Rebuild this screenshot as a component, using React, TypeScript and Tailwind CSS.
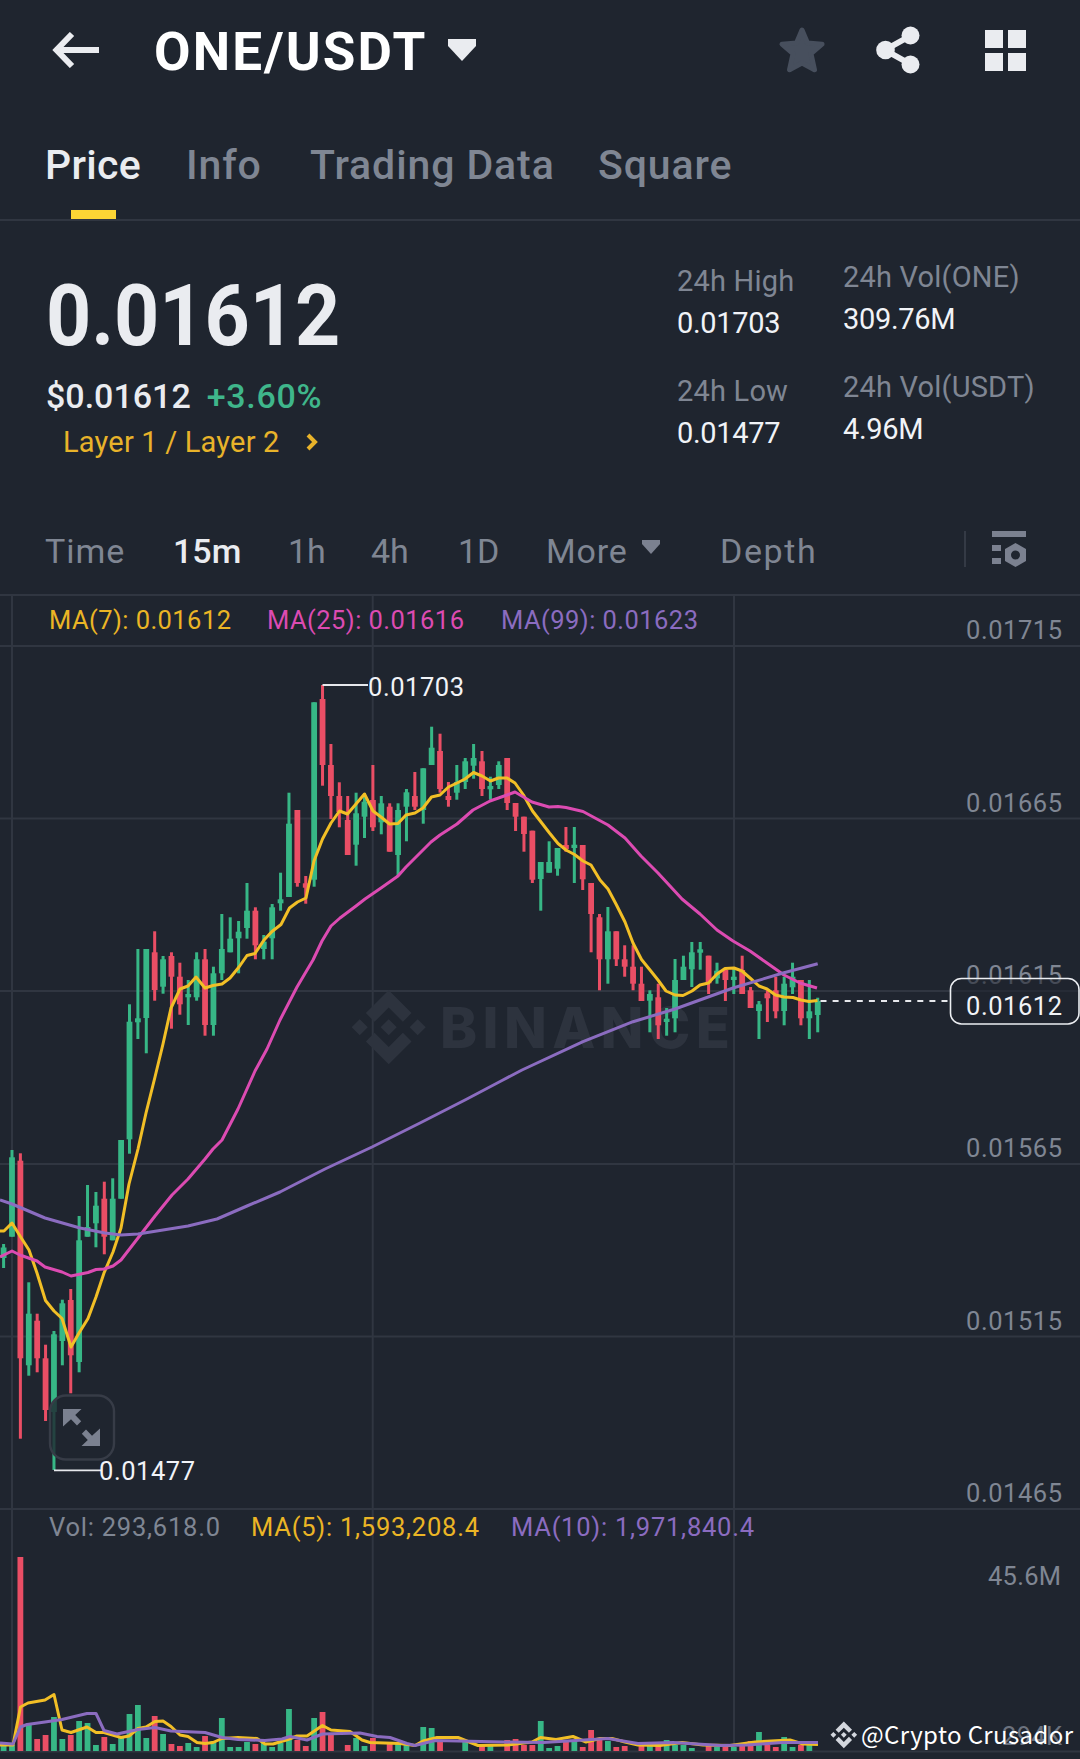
type Candle = [string, number, number, number, number, number];

const STEP = 8.393;
const X0 = 3.6;
const TOP = 594;
const VOL_BASE = 1751;

// side, high, body top, body bottom, low, volume height
const candles: Candle[] = [
  ['g', 1244, 1247.5, 1258, 1268, 6], ['g', 1150, 1157.3, 1236.7, 1236.7, 6], ['r', 1153.3, 1160.7, 1358.3, 1438.7, 194],
  ['g', 1282.3, 1313.7, 1365.3, 1375.7, 27], ['r', 1313.7, 1320.7, 1358.3, 1372.3, 12], ['r', 1344.7, 1358.3, 1410, 1421, 16],
  ['g', 1331, 1334.3, 1412, 1470, 34], ['g', 1299.7, 1303.3, 1341, 1365.3, 12], ['r', 1289, 1300, 1355.3, 1393.3, 16],
  ['g', 1216, 1240.3, 1362, 1372.3, 30], ['g', 1185, 1227, 1236.7, 1236.7, 28], ['g', 1192, 1205.7, 1223.3, 1247.3, 6],
  ['r', 1181.7, 1198.7, 1236.7, 1254.3, 14], ['g', 1178.3, 1198.7, 1240.3, 1240.3, 7], ['g', 1140, 1140, 1198.7, 1198.7, 14],
  ['g', 1004.3, 1021.7, 1139.3, 1153.7, 37], ['g', 949, 1018.3, 1022.3, 1039, 46], ['g', 949, 949, 1018, 1053.3, 13],
  ['r', 931.3, 952.3, 990, 1000.7, 35], ['g', 956, 959.3, 986.7, 993.7, 17], ['r', 952.3, 956, 976.7, 1028.7, 7],
  ['r', 962.7, 976.7, 1004.3, 1014.7, 5], ['g', 980, 994, 997.3, 1025, 8], ['g', 952.3, 959.3, 997.3, 1000.7, 4],
  ['r', 949, 959.3, 1025, 1035.7, 15], ['g', 966.7, 973.3, 1025, 1035.7, 10], ['g', 914, 949, 973.3, 980, 33],
  ['g', 917.3, 938.7, 952.3, 952.3, 4], ['g', 921, 931.7, 938.3, 973.3, 4], ['g', 883, 910.7, 928, 938.7, 9],
  ['r', 907.3, 910.7, 945.3, 959.3, 7], ['g', 935, 941.7, 949, 959.3, 8], ['g', 904, 907.3, 938.3, 959.3, 4],
  ['g', 872.7, 899.3, 903.3, 910.7, 8], ['g', 792.7, 823.7, 897, 897, 42], ['r', 810, 810, 883, 886.7, 11],
  ['r', 876, 883.3, 887.7, 903.7, 5], ['g', 702.3, 702.3, 879.7, 886.7, 33], ['r', 685, 699, 765, 785.7, 39],
  ['r', 744, 765, 796, 819, 16], ['r', 782.3, 796, 812, 827.3, 0], ['r', 796, 820, 855, 855, 6],
  ['g', 792.7, 813.3, 844.7, 865.7, 13], ['g', 793.3, 801.7, 816.7, 838, 5], ['r', 765, 800, 827.3, 831, 13],
  ['g', 796, 803.3, 822.3, 834.3, 0], ['r', 803.3, 806.7, 851.7, 851.7, 7], ['g', 803.3, 810, 855, 876, 9],
  ['g', 789, 792.3, 806.7, 841.3, 6], ['r', 772, 796, 806.7, 810, 0], ['g', 768.3, 768.3, 810, 823.7, 24],
  ['g', 726.7, 747.7, 765, 765, 23], ['r', 733.7, 751, 789, 792.7, 11], ['r', 782, 796, 800, 806.7, 0],
  ['g', 765, 782, 792.7, 799.7, 0], ['g', 758, 761.3, 782, 789, 9], ['g', 744, 758, 765.7, 778.7, 0],
  ['r', 751, 761.3, 789, 796, 6], ['g', 776.7, 786, 789.3, 799.7, 6], ['g', 761.3, 765, 785, 789, 0],
  ['r', 758, 758, 803, 810, 11], ['r', 803, 803, 816.7, 831, 12], ['r', 816.7, 816.7, 834, 851.7, 6],
  ['r', 830.7, 830.7, 879.7, 883, 6], ['g', 862, 862, 879, 910.7, 30], ['g', 841.3, 862, 872.7, 872.7, 3],
  ['g', 848, 848, 868.7, 875.7, 5], ['r', 827, 845, 849, 851.7, 9], ['g', 827, 844.7, 848, 883, 10],
  ['r', 845, 845, 879.3, 890, 4], ['r', 883, 883, 914, 952.3, 21], ['r', 914, 917.3, 959.3, 990.3, 11],
  ['g', 907, 931.3, 959.3, 983.7, 10], ['r', 931.3, 931.3, 959.3, 966, 4], ['r', 945.3, 959.3, 966.7, 976.7, 5],
  ['r', 945.3, 966.7, 983.7, 990.3, 0], ['r', 966.7, 983.7, 1001, 1001, 5], ['g', 990.3, 994, 1000.7, 1032.3, 5],
  ['r', 983.7, 997.3, 1025.3, 1039, 5], ['g', 1008, 1018.7, 1022, 1035.7, 11], ['g', 959, 980, 1018.3, 1032.3, 6],
  ['g', 955.7, 966.7, 980, 980, 6], ['g', 942, 952.3, 969.3, 987, 3], ['g', 942, 949.3, 952.7, 969.7, 0],
  ['r', 955.7, 955.7, 983.3, 994, 6], ['g', 962.7, 970.7, 978.3, 983.7, 4], ['r', 968.3, 970, 980, 1001, 4],
  ['g', 968.3, 976.7, 980, 994, 4], ['r', 955.7, 970, 994, 994, 5], ['r', 987, 990.3, 1008, 1008, 10],
  ['g', 1001, 1004.3, 1011, 1039, 19], ['r', 990.3, 993.3, 998.3, 1022, 6], ['r', 976.7, 990.3, 1011.3, 1018.3, 4],
  ['g', 976.7, 983.7, 1011, 1025.3, 14], ['g', 962.7, 976.7, 987.3, 994, 4], ['r', 980, 980, 1018.3, 1025.3, 6],
  ['g', 980, 1011.3, 1018.3, 1039, 6], ['g', 997.7, 1001, 1015, 1032.3, 0],
];

const ma7 =
  '0,1231 4,1231 12,1223 20,1236 29,1250 37,1273 45.5,1300.5 54,1311 62,1318.5 71,1347 79,1333 88,1318.5 96,1297 104,1273 113,1252 121,1228 129,1184 138,1149 146,1113 155,1077 163,1044 171,1008 180,989 188,986 196,977 205,988 213,985.5 222,984 230,978 239,967 247,955.5 255,953.5 264,940 272,931.5 281,924.5 289.5,908 297.5,902 306,898 314,861 322.5,839 331,823 339.5,811 347.5,814 356,804 364.5,794 373,811 381,817 389.5,824 398,823.5 406,815 415,813 423,808 431.5,797 440,795 448.5,787 457,783 465,779 473.5,772.5 482,776 490.5,781 498.5,778 507,778 515,783 523.5,795 532.5,811 541,822 549.5,833 558,843.5 566,850 574.5,854.5 583,861 591,865 600,880 608,889 616.5,905 625,922 633,943 641.5,959.5 650,970 658,980 666,991 675,995 683,995.5 692,991 700,985 708.5,983 717,974 725,968.5 734,968 742,971 750,978 759,986 767,989 775.5,995 784,997 793,997.5 801,1000 809,1001.5 817.5,1000.5';
const ma25 =
  '0,1257 12,1251 20,1255 37,1261 45,1267 62,1272 71,1276 88,1272.5 96,1269.5 104,1269 113,1266 121,1260 138,1238 155,1216 172,1195 188,1179 205,1159 213,1149 222,1140 238,1109 255,1071 267,1049 280,1020 297,987 313,960 322,941 331,926 340,918 356,906 365,899 381,888 398,876 406,867 423,850 431,842 440,835 457,824 473,810 490,801 507,795 515,792 532,802 549,807 558,806.5 566,807.5 583,811.5 608,825 625,838 641,856 658,873 682,899 700,914 717,930 733,941 750,951 767,963 784,975 800,983 817,988';
const ma99 =
  '0,1200 12,1204 45,1218 80,1228 105,1233 121,1235 138,1234 163,1230 188,1226 217,1219 247,1206 280,1192 325,1169 372,1147 420,1123 466,1099.5 502,1080.5 522,1070 583,1041.7 633,1021.7 675,1009 733,988 783,973 817.7,963.7';
const volMa5 =
  '0,1745 13,1745 20.5,1707 28,1703 45,1700 54,1694.5 62,1730 71,1732.5 87,1727 96,1732.5 104,1732.5 121,1737.5 129,1736 138,1728.5 146,1727 155,1721.5 163,1721 171,1726.5 180,1735 188,1736.5 197,1742.5 205,1743.5 213,1742.5 222,1738.5 238,1737.5 257,1738.5 265,1744 273,1744 288,1739.5 297,1736 307,1736 322.5,1725.5 331,1730 350,1731.5 362,1740 370,1742.5 400,1743.5 415,1745.5 423,1741 437,1737.5 458,1737.5 478,1745.5 508,1745 532,1742 540.5,1737.5 556,1739.5 573,1736.5 586,1742 600,1738.5 612,1738.5 625,1742 638,1745 660,1745.5 682,1742.5 703,1745 730,1745.5 755,1742 790,1740 803,1744 818,1744.5';
const volMa10 =
  '0,1743 13,1744 20.5,1727 27,1724.5 45,1722 62,1719.5 87,1713.5 96,1713.5 104,1730.5 117,1734 138,1729.5 155,1727.5 171,1731 205,1732.5 222,1737.5 238,1739.5 265,1740.5 282,1739 290,1736.5 307,1740 322.5,1734 360,1733 377,1736.5 390,1737.5 407,1743.5 415,1745.5 435,1740.5 504,1742 543,1742.5 608,1738.5 638,1743.5 673,1742.5 721,1745.5 747,1745 782,1742.5 818,1742.5';

const tabs = ['Price', 'Info', 'Trading Data', 'Square'];
const gridRows = [646, 818.5, 991, 1164, 1336.5, 1509];
const gridCols = [12, 372.7, 734];
const axis = ['0.01715', '0.01665', '0.01615', '0.01565', '0.01515', '0.01465'];

function Label({ x, y, w, color, children, size = 25.5 }: { x: number; y: number; w: number; color: string; children: string; size?: number }) {
  return (
    <text x={x} y={y} textLength={w} fill={color} fontSize={size}>
      {children}
    </text>
  );
}

function BinanceMark() {
  return (
    <>
      <path d="M12 0 4.6 7.4l2.8 2.8L12 5.6l4.6 4.6 2.8-2.8zM12 24l-7.4-7.4 2.8-2.8 4.6 4.6 4.6-4.6 2.8 2.8z" />
      <path d="M2.6 9.4 5.2 12l-2.6 2.6L0 12zM21.4 9.4 24 12l-2.6 2.6-2.6-2.6zM12 9.4l2.6 2.6-2.6 2.6L9.4 12z" />
    </>
  );
}

function Stat({ label, value }: { label: string; value: string }) {
  return (
    <div className="h-[110px] text-[29px] leading-[36px] whitespace-nowrap">
      <p className="text-[#7f8693] tracking-[0.2px]">{label}</p>
      <p className="mt-[6px] text-[#f1f3f7] tracking-[-0.3px]">{value}</p>
    </div>
  );
}

function Chart() {
  return (
    <svg className="block w-[1080px] h-[1165px]" viewBox={`0 ${TOP} 1080 1165`} fontFamily="Roboto, sans-serif">
      <g stroke="#303641" strokeWidth="2">
        {gridRows.map((y) => (
          <line key={y} x1="0" x2="1080" y1={y} y2={y} />
        ))}
        {gridCols.map((x) => (
          <line key={x} x1={x} x2={x} y1={TOP} y2={VOL_BASE} />
        ))}
        <line x1="0" x2="1080" y1="1751.5" y2="1751.5" />
        <line x1="0" x2="1080" y1="595" y2="595" />
      </g>

      {/* Watermark */}
      <g fill="#2d333e">
        <g transform="translate(351.7 990.3) scale(3.083)">
          <BinanceMark />
        </g>
        <text x="440" y="1047.7" textLength="290" fontSize="56" fontWeight="800" fontFamily="Inter, sans-serif">
          BINANCE
        </text>
      </g>

      {candles.map(([side, high, top, bottom, low, vol], i) => {
        const x = X0 + i * STEP;
        return (
          <g key={i} fill={side === 'g' ? '#37b786' : '#ea4e65'}>
            <rect x={x - 1.5} y={high} width="3" height={low - high} />
            <rect x={x - 2.9} y={top} width="5.8" height={bottom - top} />
            <rect x={x - 2.9} y={VOL_BASE - vol} width="5.8" height={vol} />
          </g>
        );
      })}

      <g fill="none" strokeWidth="3" strokeLinejoin="round">
        <polyline points={ma7} stroke="#f2bf26" />
        <polyline points={ma25} stroke="#dc4bb2" />
        <polyline points={ma99} stroke="#8b6cc0" />
        <polyline points={volMa5} stroke="#f2bf26" />
        <polyline points={volMa10} stroke="#8b6cc0" />
      </g>

      {/* Indicator legends */}
      <Label x={49} y={628.7} w={182} color="#ebb525">MA(7): 0.01612</Label>
      <Label x={267} y={628.7} w={197} color="#dc4bb2">MA(25): 0.01616</Label>
      <Label x={501} y={628.7} w={197} color="#8b6cc0">MA(99): 0.01623</Label>
      <Label x={49} y={1535.7} w={171} color="#7f8693">Vol: 293,618.0</Label>
      <Label x={251} y={1535.7} w={228} color="#ebb525">MA(5): 1,593,208.4</Label>
      <Label x={511} y={1535.7} w={243} color="#8b6cc0">MA(10): 1,971,840.4</Label>

      {/* Price axis */}
      {axis.map((v, i) => (
        <Label key={v} x={966} y={gridRows[i] - 7} w={96} color="#7f8693">
          {v}
        </Label>
      ))}
      <Label x={988} y={1585} w={73} color="#7f8693">45.6M</Label>
      <Label x={1002} y={1745} w={60} color="#6c727e">294K</Label>

      {/* High and low markers */}
      <path d="M322.5 685H368M54 1470.3h47" stroke="#e6e8ec" strokeWidth="1.8" />
      <Label x={368} y={695.7} w={96} color="#f1f3f7">0.01703</Label>
      <Label x={99} y={1479.7} w={96} color="#f1f3f7">0.01477</Label>

      {/* Last price */}
      <path d="M820.5 1001H950" stroke="#e6e8ec" strokeWidth="2" strokeDasharray="6 6.1" />
      <rect x="950.5" y="978.5" width="128.5" height="45.5" rx="11" fill="#1f252f" fillOpacity="0.6" stroke="#eceef2" strokeWidth="1.6" />
      <Label x={966} y={1015} w={96} color="#f1f3f7">0.01612</Label>

      {/* Fullscreen button */}
      <rect x="50" y="1395.5" width="64" height="64" rx="16" fill="#1f252f" fillOpacity="0.8" stroke="#373c47" strokeWidth="2.4" />
      <path
        d="M63 1409h18.500l-6.300 6 6 6.200-4.200 4.300-6-6.200-8 7.200zM100 1446H81.500l6.300-6-6-6.200 4.200-4.300 6 6.200 8-7.200z"
        fill="#7b8190"
      />

      {/* Author */}
      <g fill="#d3d7de" transform="translate(830.5 1721.5) scale(1.11)">
        <BinanceMark />
      </g>
      <text x="861" y="1744" textLength="212" fontSize="24" fill="#ffffff" fontFamily="'Noto Sans CJK SC', sans-serif">
        @Crypto Crusador
      </text>
    </svg>
  );
}

export default function App() {
  return (
    <div className="w-[1080px] h-[1759px] overflow-hidden bg-[#1f252f] font-['Roboto',sans-serif] text-[#eaecf0]">
      <header className="flex h-[100px] items-center pl-[52px] pr-[54px]">
        <svg className="h-9 w-12" viewBox="0 0 48 36" fill="none" stroke="#eaecf0" strokeWidth="6">
          <path d="M47 18H6M20 2 4.500 18 20 34" />
        </svg>
        <h1 className="ml-[54px] pt-1 text-[53px] leading-none font-bold text-white tracking-[2.1px]">ONE/USDT</h1>
        <svg className="ml-[21px] h-[22px] w-7" viewBox="0 0 28 22" fill="#eaecf0">
          <path d="M0 0h28v7L14 22 0 7z" />
        </svg>
        <div className="ml-auto flex items-center">
          <svg className="h-12 w-12" viewBox="0 0 48 48" fill="#474f5d" stroke="#474f5d" strokeWidth="5" strokeLinejoin="round">
            <path d="m24 4 5.500 13 14.500 1.200-11 9.500 3.500 16L24 37l-12.500 6.700 3.500-16-11-9.500L18.500 17z" />
          </svg>
          <svg className="ml-[50px] h-12 w-11" viewBox="0 0 44 48" fill="#eaecf0">
            <path d="M35 9.500 9 24l26 14.500" fill="none" stroke="#eaecf0" strokeWidth="6" />
            <circle cx="9.500" cy="24" r="9.300" />
            <circle cx="34.500" cy="9.500" r="9" />
            <circle cx="34.500" cy="38.500" r="9" />
          </svg>
          <div className="ml-[65px] grid grid-cols-2 gap-[5px]">
            {[0, 1, 2, 3].map((n) => (
              <span key={n} className="h-[18px] w-[18px] bg-[#eaecf0]" />
            ))}
          </div>
        </div>
      </header>

      <nav className="grid h-[121px] grid-cols-[141px_124px_288px_1fr] border-b-2 border-[#303641] pl-[45px] text-[41px] leading-[48px] font-medium text-[#7f8693]">
        {tabs.map((tab, i) => (
          <div key={tab} className="flex flex-col items-start pt-[41px]">
            <span className={i === 0 ? 'text-[#eaecf0] tracking-[0.3px]' : 'tracking-[0.9px]'}>{tab}</span>
            {i === 0 && <span className="mt-[21px] ml-[26px] h-[9px] w-[45px] bg-[#fcd535]" />}
          </div>
        ))}
      </nav>

      <section className="flex h-[286px]">
        <div className="w-[677px] pl-[46px] pt-[52px]">
          <p className="origin-left scale-x-[0.917] text-[86px] leading-[86px] font-bold">0.01612</p>
          <p className="mt-[17px] flex gap-4 text-[34px] leading-[40px] font-medium">
            <span>$0.01612</span>
            <span className="text-[#3fb68b] tracking-[0.7px]">+3.60%</span>
          </p>
          <p className="mt-[8px] ml-[17px] flex items-center text-[29px] leading-[36px] text-[#e8b32a] tracking-[0.2px]">
            Layer 1 / Layer 2
            <svg className="ml-[26px] h-[18px] w-3" viewBox="0 0 12 18" fill="none" stroke="#e8b32a" strokeWidth="4">
              <path d="m2 2 7 7-7 7" />
            </svg>
          </p>
        </div>
        <div className="w-[166px] pt-[42px]">
          <Stat label="24h High" value="0.01703" />
          <Stat label="24h Low" value="0.01477" />
        </div>
        <div className="pt-[38px]">
          <Stat label="24h Vol(ONE)" value="309.76M" />
          <Stat label="24h Vol(USDT)" value="4.96M" />
        </div>
      </section>

      <div className="flex h-[87px] items-center pl-[45px] text-[34px] leading-[40px] text-[#7f8693]">
        <span className="w-[128px] tracking-[1px]">Time</span>
        <span className="w-[115px] font-medium text-[#eaecf0]">15m</span>
        <span className="w-[83px]">1h</span>
        <span className="w-[87px]">4h</span>
        <span className="w-[88px]">1D</span>
        <span className="w-[96px] tracking-[0.8px]">More</span>
        <svg className="h-[14px] w-[18px] -mt-2" viewBox="0 0 18 14" fill="#7b8190">
          <path d="M0 0h18v4L9 14 0 4z" />
        </svg>
        <span className="ml-[60px] w-[244px] tracking-[1.6px]">Depth</span>
        <span className="h-9 w-[2px] -mt-1 bg-[#343a45]" />
        <svg className="ml-[26px] h-9 w-[35px] -mt-1" viewBox="0 0 35 36" fill="#7b8190">
          <path d="M0 0h34v6H0zM0 14h9v6H0zM0 27h9v6H0z" />
          <path fillRule="evenodd" d="m23.500 12 10.500 6v12l-10.500 6L13 30V18zM23.500 19.500a4.500 4.500 0 1 0 0 9 4.500 4.500 0 0 0 0-9z" />
        </svg>
      </div>

      <Chart />
    </div>
  );
}
